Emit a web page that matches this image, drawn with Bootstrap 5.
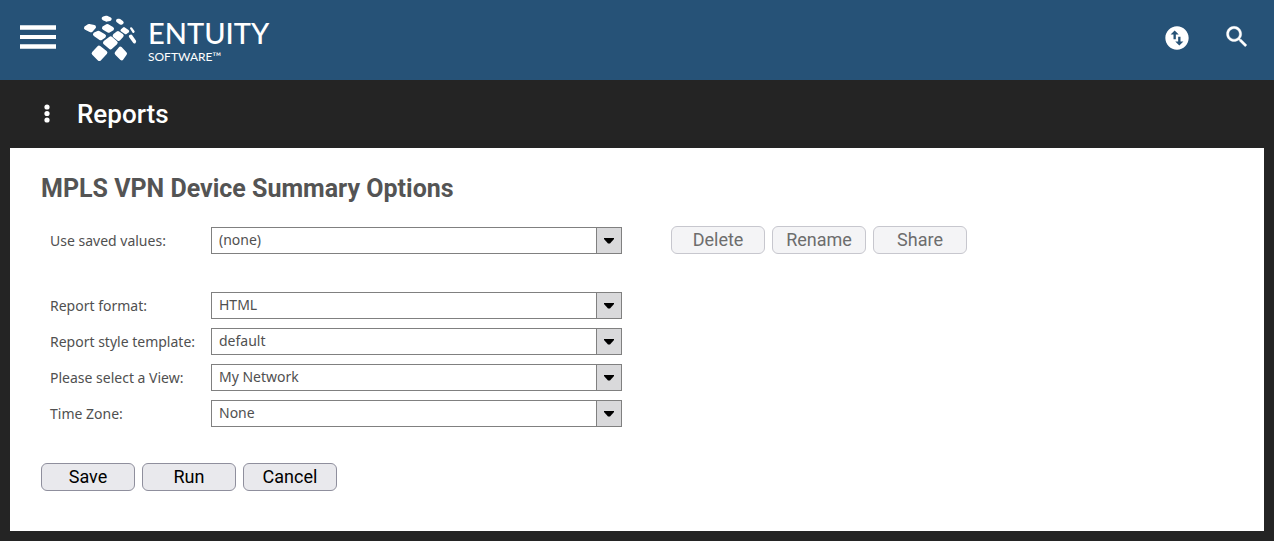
<!DOCTYPE html>
<html lang="en">
<head>
<meta charset="utf-8">
<meta name="viewport" content="width=device-width, initial-scale=1">
<title>Entuity - Reports</title>
<link href="https://cdn.jsdelivr.net/npm/bootstrap@5.3.0/dist/css/bootstrap.min.css" rel="stylesheet">
<style>
  body { background: #242424; font-family: Roboto, sans-serif; }
  .topbar { background: #265277; height: 80px; padding: 0 23px 4px 20px; }
  .plain-btn { background: none; border: 0; padding: 0; color: #fff; display: block; line-height: 0; }
  .brand-link { margin-left: 24px; color: #fff; text-decoration: none; font-family: Lato, sans-serif; }
  .brand-words { margin-left: 4px; padding-top: 4px; gap: 3px; }
  .brand-name { font-size: 29px; line-height: 30px; font-weight: 500; }
  .brand-sub { font-size: 12px; line-height: 12px; }
  .tools { gap: 32px; }
  .titlebar { height: 68px; padding-left: 44px; gap: 27px; }
  .titlebar h1 { font-size: 26px; font-weight: 500; line-height: 32px; color: #fff; }
  .panel { background: #fff; margin: 0 10px 10px; padding: 25px 31px 40px; }
  .panel h2 { font-size: 25px; font-weight: 700; line-height: 32px; color: #545454; margin: 0 0 21px; }
  .field-row { height: 28px; margin-bottom: 8px; }
  .field-row.saved { margin-bottom: 37px; }
  .field-row label, .combo { font-family: "Noto Sans", sans-serif; font-size: 14px; color: #505050; }
  .field-row label { width: 170px; padding-left: 9px; flex: none; white-space: nowrap; }
  .combo {
    width: 411px; height: 27px; padding: 0 32px 0 7px; line-height: 24px;
    border: 1px solid #808080; border-radius: 0; appearance: none;
    background:
      url("data:image/svg+xml,%3Csvg xmlns='http://www.w3.org/2000/svg' width='10' height='6'%3E%3Cpath d='M0 0h10v1L6 5.500H4L0 1z'/%3E%3C/svg%3E") no-repeat right 7px top 10px,
      linear-gradient(to right, #808080 1px, #d9d9db 1px) no-repeat right / 25px 100%,
      #fff;
  }
  .act { width: 94px; height: 28px; padding: 0; font-size: 18px; line-height: 26px; border: 1px solid #8f8f9d; border-radius: 6px; background: #e9e9ed; color: #000; }
  .act:disabled { border-color: #c7c7ce; background: #f4f4f6; color: #6d6d6d; }
  .btn-set { gap: 7px; }
  .saved .btn-set { margin-left: 49px; }
  .form-end { padding-top: 28px; }
</style>
</head>
<body>
<header class="topbar d-flex align-items-center justify-content-between">
  <div class="d-flex align-items-center">
    <button class="plain-btn" type="button" aria-label="Menu">
      <svg width="36" height="28" viewBox="0 0 36 28" fill="#fff"><path d="M0 1.300h36v4.500H0zM0 11h36v4H0zM0 20.200h36v4.600H0z"/></svg>
    </button>
    <a class="brand-link d-flex align-items-center" href="#">
      <svg width="64" height="56" viewBox="0 0 192 168" fill="#fff" stroke="#fff" stroke-width="12" stroke-linejoin="round" aria-hidden="true">
        <path d="M71 25l8-2 10 4-9 2zM114 32l3 0 8 6-3 0zM18 54l9-6 15 3-9 10zM72 54l10-6 14 8-10 6zM45 73l10-5 17 10-10 7zM75 98l17-13 15 13-15 14zM41 130l16-17 19 15-18 19zM110 130l11-14 14 15-10 14zM104 77l10-8 11 8-9 10z"/>
        <path stroke-width="9" d="M151 79l2-1 11 16-1 2zM126 61l6-5 11 8-6 4z"/>
        <path stroke-width="6" d="M153 55l1 0 7 10-1 1z"/>
      </svg>
      <span class="brand-words d-flex flex-column">
        <span class="brand-name">ENTUITY</span>
        <span class="brand-sub">SOFTWARE™</span>
      </span>
    </a>
  </div>
  <div class="tools d-flex align-items-center">
    <button class="plain-btn" type="button" aria-label="Transfers">
      <svg width="28" height="28" viewBox="0 0 24 24" fill="#fff"><path d="M12 2C6.480 2 2 6.480 2 12s4.480 10 10 10 10-4.480 10-10S17.520 2 12 2zM6.500 9L10 5.500 13.500 9H11v4H9V9H6.500zm11 6L14 18.500 10.500 15H13v-4h2v4h2.500z"/></svg>
    </button>
    <button class="plain-btn" type="button" aria-label="Search">
      <svg width="28" height="32" viewBox="0 0.500 24 27" fill="#fff" stroke="#fff" stroke-width=".3"><path d="M15.500 14h-.79l-.28-.27C15.410 12.590 16 11.110 16 9.500 16 5.910 13.090 3 9.500 3S3 5.910 3 9.500 5.910 16 9.500 16c1.610 0 3.090-.59 4.230-1.570l.27.28v.79l5 4.990L20.490 19l-4.990-5zm-6 0C7.010 14 5 11.990 5 9.500S7.010 5 9.500 5 14 7.010 14 9.500 11.990 14 9.500 14z" transform="translate(0 1)"/></svg>
    </button>
  </div>
</header>

<div class="titlebar d-flex align-items-center">
  <button class="plain-btn" type="button" aria-label="More options">
    <svg width="6" height="20" viewBox="0 0 6 20" fill="#fff"><circle cx="3" cy="3" r="2.600"/><circle cx="3" cy="9.500" r="2.600"/><circle cx="3" cy="16" r="2.600"/></svg>
  </button>
  <h1 class="m-0">Reports</h1>
</div>

<main class="panel">
  <h2>MPLS VPN Device Summary Options</h2>
  <form>
    <div class="field-row saved d-flex align-items-center">
      <label for="saved">Use saved values:</label>
      <select class="combo" id="saved"><option>(none)</option></select>
      <div class="btn-set d-flex">
        <button class="act" type="button" disabled>Delete</button>
        <button class="act" type="button" disabled>Rename</button>
        <button class="act" type="button" disabled>Share</button>
      </div>
    </div>
    <div class="field-row d-flex align-items-center">
      <label for="format">Report format:</label>
      <select class="combo" id="format"><option>HTML</option></select>
    </div>
    <div class="field-row d-flex align-items-center">
      <label for="style">Report style template:</label>
      <select class="combo" id="style"><option>default</option></select>
    </div>
    <div class="field-row d-flex align-items-center">
      <label for="view">Please select a View:</label>
      <select class="combo" id="view"><option>My Network</option></select>
    </div>
    <div class="field-row d-flex align-items-center">
      <label for="zone">Time Zone:</label>
      <select class="combo" id="zone"><option>None</option></select>
    </div>
    <div class="form-end btn-set d-flex">
      <button class="act" type="button">Save</button>
      <button class="act" type="button">Run</button>
      <button class="act" type="button">Cancel</button>
    </div>
  </form>
</main>
<script src="https://cdn.jsdelivr.net/npm/bootstrap@5.3.0/dist/js/bootstrap.bundle.min.js"></script>
</body>
</html>
